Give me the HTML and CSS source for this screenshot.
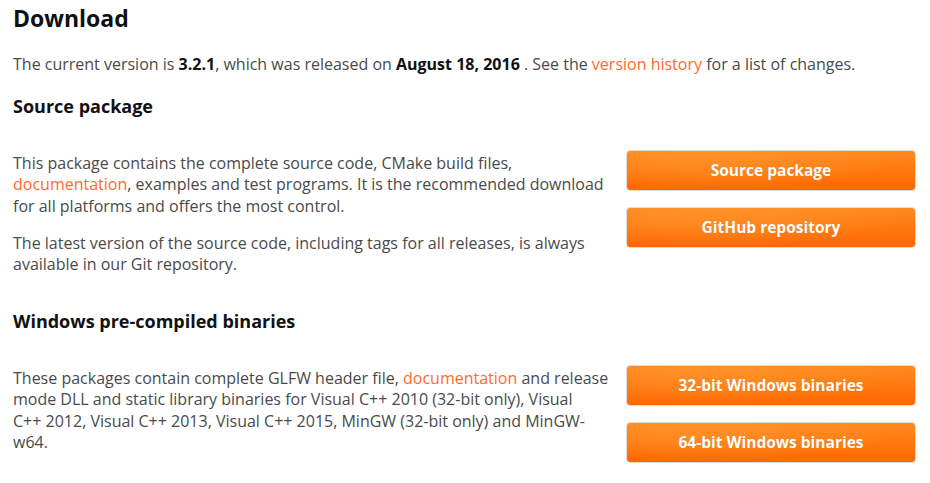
FILE: index.html
```html
<!DOCTYPE html>
<html lang="en">
<head>
    <meta charset="UTF-8">
    <meta name="viewport" content="width=device-width, initial-scale=1.0">
    <title>Download | GLFW</title>
    <link rel="stylesheet" href="styles.css">
</head>
<body>

    <div class="page">
        <h1>Download</h1>
        <p class="intro">The current version is <strong>3.2.1</strong>, which was released on <strong>August 18, 2016</strong> . See the <a href="#">version history</a> for a list of changes.</p>

        <h2>Source package</h2>
        <div class="row">
            <div class="text">
                <p>This package contains the complete source code, CMake build files, <a href="#">documentation</a>, examples and test programs. It is the recommended download for all platforms and offers the most control.</p>
                <p>The latest version of the source code, including tags for all releases, is always available in our Git repository.</p>
            </div>
            <div class="buttons">
                <a class="btn" href="#">Source package</a>
                <a class="btn" href="#">GitHub repository</a>
            </div>
        </div>

        <h2>Windows pre-compiled binaries</h2>
        <div class="row">
            <div class="text">
                <p>These packages contain complete GLFW header file, <a href="#">documentation</a> and release mode DLL and static library binaries for Visual C++&nbsp;2010 (32-bit only), Visual C++&nbsp;2012, Visual C++&nbsp;2013, Visual C++&nbsp;2015, MinGW (32-bit only) and MinGW-w64.</p>
            </div>
            <div class="buttons">
                <a class="btn" href="#">32-bit Windows binaries</a>
                <a class="btn" href="#">64-bit Windows binaries</a>
            </div>
        </div>
    </div>

</body>
</html>
```

FILE: styles.css
```css
body {
    margin: 0;
    background-color: #fff;
    color: #4a4a4a;
    font-family: "Open Sans", "Noto Sans", sans-serif;
    font-size: 16px;
    line-height: 21.5px;
}

.page {
    padding: 0 14px 0 13px;
}

h1 {
    font-size: 23px;
    line-height: 30px;
    font-weight: 700;
    color: #111;
    margin: 3px 0 0;
}

h2 {
    font-size: 18px;
    line-height: 24px;
    font-weight: 700;
    color: #111;
    margin: 0 0 32px;
}

p {
    margin: 0 0 15.5px;
}

.intro {
    margin: 21px 0 18px;
}

strong {
    color: #111;
}

a {
    color: #ff6a2e;
    text-decoration: none;
}

.row {
    display: grid;
    grid-template-columns: 1fr 290px;
    gap: 14px;
    margin-bottom: 33px;
}

.text {
    padding-top: 3px;
}

.text p:last-child {
    margin-bottom: 0;
}

.buttons {
    display: flex;
    flex-direction: column;
    gap: 16px;
}

.btn {
    display: block;
    height: 41px;
    line-height: 39px;
    box-sizing: border-box;
    border: 1px solid #e2ddd8;
    border-radius: 4px;
    background: radial-gradient(ellipse at 30% 0%, #ff9228, rgba(255, 138, 30, 0) 70%),
        linear-gradient(#ff8a1f, #ff6600);
    color: #fff;
    font-size: 15.5px;
    font-weight: 700;
    text-align: center;
    text-shadow: 0 0 1px rgba(0, 0, 0, 0.15);
}
```
